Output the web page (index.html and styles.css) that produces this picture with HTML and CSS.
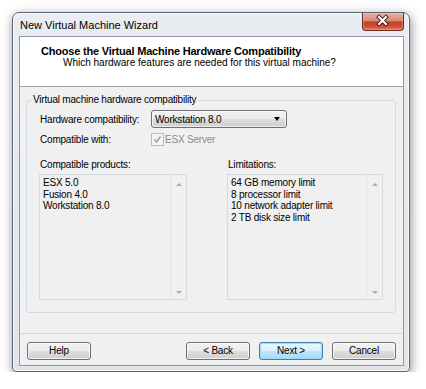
FILE: index.html
```html
<!DOCTYPE html>
<html>
<head>
<meta charset="utf-8">
<title>New Virtual Machine Wizard</title>
<link rel="stylesheet" href="styles.css">
</head>
<body>
<div class="window">
  <div class="titlebar">
    <span class="title">New Virtual Machine Wizard</span>
    <button class="close" aria-label="Close">
      <svg width="42" height="18" viewBox="0 0 42 18">
        <path d="M17.5 5 L24.5 12 M24.5 5 L17.5 12" stroke="#4a1d17" stroke-width="4.2" stroke-linecap="square" fill="none"/>
        <path d="M17.5 5 L24.5 12 M24.5 5 L17.5 12" stroke="#ffffff" stroke-width="2.2" stroke-linecap="square" fill="none"/>
      </svg>
    </button>
  </div>
  <div class="client">
    <div class="header">
      <div class="h-title">Choose the Virtual Machine Hardware Compatibility</div>
      <div class="h-sub">Which hardware features are needed for this virtual machine?</div>
    </div>
    <div class="body">
      <fieldset class="group">
        <legend>Virtual machine hardware compatibility</legend>
        <div class="gb">
          <div class="row">
            <span class="lbl">Hardware compatibility:</span>
            <div class="combo"><span>Workstation 8.0</span><span class="arrow"></span></div>
          </div>
          <div class="row row2">
            <span class="lbl">Compatible with:</span>
            <span class="check">
              <span class="box"><svg width="11" height="11" viewBox="0 0 11 11"><path d="M2.5 5.5 L4.5 8 L8.5 2.5" stroke="#a2a2a2" stroke-width="1.4" fill="none"/></svg></span>
              <span class="dis">ESX Server</span>
            </span>
          </div>
          <div class="lists">
            <div class="col">
              <div class="lbl">Compatible products:</div>
              <div class="list">
                <ul class="items">
                  <li>ESX 5.0</li>
                  <li>Fusion 4.0</li>
                  <li>Workstation 8.0</li>
                </ul>
                <div class="sb"><span class="up"></span><span class="down"></span></div>
              </div>
            </div>
            <div class="col">
              <div class="lbl">Limitations:</div>
              <div class="list">
                <ul class="items">
                  <li>64 GB memory limit</li>
                  <li>8 processor limit</li>
                  <li>10 network adapter limit</li>
                  <li>2 TB disk size limit</li>
                </ul>
                <div class="sb"><span class="up"></span><span class="down"></span></div>
              </div>
            </div>
          </div>
        </div>
      </fieldset>
    </div>
    <div class="footer">
      <button class="btn">Help</button>
      <button class="btn back">&lt; Back</button>
      <button class="btn default">Next &gt;</button>
      <button class="btn">Cancel</button>
    </div>
  </div>
</div>
</body>
</html>
```
FILE: styles.css
```css
html, body {
  margin: 0;
  background: #ffffff;
  font-family: "Liberation Sans", Arial, sans-serif;
}

.window {
  margin: 12px 0 0 12px;
  width: 398px;
  box-sizing: border-box;
  border: 1px solid #5b6673;
  border-radius: 7px 7px 4px 4px;
  background: linear-gradient(#e9edf1, #dfe5eb);
  padding: 0 5px 5px 6px;
  box-shadow: 1px 3px 11px rgba(0, 0, 0, 0.45), inset 0 0 0 1px rgba(255, 255, 255, 0.7);
}

.titlebar {
  display: flex;
  justify-content: space-between;
  align-items: flex-start;
  height: 23px;
}

.title {
  font-size: 11px;
  line-height: 13px;
  padding-top: 6px;
  margin-left: 1px;
  color: #000;
}

.close {
  width: 42px;
  height: 18px;
  padding: 0;
  margin: 0;
  box-sizing: border-box;
  border: 1px solid #6b2a20;
  border-top: none;
  border-radius: 0 0 4px 4px;
  background: linear-gradient(#eab0a2 0%, #d9897a 45%, #c5432d 52%, #c94a33 75%, #e07a5c 100%);
  box-shadow: inset 0 0 0 1px rgba(255, 200, 190, 0.35);
  display: flex;
  align-items: center;
  justify-content: center;
}
.close svg { display: block; margin: -1px 0 0 -1px; }

.client {
  height: 330px;
  box-sizing: border-box;
  border: 1px solid #8f9aa6;
  background: #f0f0f0;
  display: flex;
  flex-direction: column;
  font-size: 10px;
  letter-spacing: -0.2px;
  color: #000;
}

.header {
  height: 49px;
  background: #ffffff;
  border-bottom: 1px solid #a0a0a0;
  padding-top: 8px;
  box-sizing: border-box;
  height: 50px;
}
.h-title {
  font-size: 11px;
  font-weight: bold;
  line-height: 12px;
  padding-left: 21px;
}
.h-sub {
  font-size: 10px;
  letter-spacing: 0;
  line-height: 12px;
  padding-left: 43px;
}

.body {
  flex: 1;
}

.group {
  margin: 7px 7px 0 6px;
  padding: 0;
  border: 1px solid #d3dce3;
  border-radius: 3px;
  min-width: 0;
}
.group legend {
  margin-left: 4px;
  padding: 0 2px;
  font-size: 10px;
  line-height: 12px;
}

.gb {
  padding: 4px 12px 12px 12px;
}

.row {
  display: flex;
  align-items: center;
  height: 18px;
}
.row2 { margin-top: 2px; }
.row .lbl {
  width: 111px;
  padding-left: 1px;
}

.combo {
  width: 136px;
  height: 18px;
  box-sizing: border-box;
  border: 1px solid #707070;
  border-radius: 3px;
  background: linear-gradient(#f2f2f2 0%, #ebebeb 50%, #dddddd 51%, #cfcfcf 100%);
  box-shadow: inset 0 0 0 1px rgba(255, 255, 255, 0.6);
  display: flex;
  align-items: center;
  justify-content: space-between;
  padding: 0 6px 0 3px;
}
.arrow {
  width: 0;
  height: 0;
  border-left: 3.5px solid transparent;
  border-right: 3.5px solid transparent;
  border-top: 4px solid #000;
}

.check {
  display: flex;
  align-items: center;
}
.box {
  width: 13px;
  height: 13px;
  box-sizing: border-box;
  border: 1px solid #bcbcbc;
  background: #f4f4f4;
  margin-right: 1px;
  display: flex;
}
.box svg { display: block; }
.dis { color: #8d8d8d; }

.lists {
  display: grid;
  grid-template-columns: 148px 156px;
  column-gap: 40px;
  margin-top: 11px;
}
.col .lbl {
  line-height: 12px;
  margin-bottom: 3px;
  padding-left: 1px;
}

.list {
  height: 126px;
  box-sizing: border-box;
  border: 1px solid #d4dadf;
  display: flex;
}
.items {
  flex: 1;
  list-style: none;
  margin: 0;
  padding: 2px 3px;
  line-height: 11.5px;
}
.sb {
  width: 15px;
  border-left: 1px solid #e4e4e4;
  display: flex;
  flex-direction: column;
  justify-content: space-between;
  align-items: center;
  padding: 8px 0 5px;
}
.up {
  width: 0;
  height: 0;
  border-left: 3px solid transparent;
  border-right: 3px solid transparent;
  border-bottom: 3px solid #aeaeae;
}
.down {
  width: 0;
  height: 0;
  border-left: 3px solid transparent;
  border-right: 3px solid transparent;
  border-top: 3px solid #aeaeae;
}

.footer {
  height: 32px;
  box-sizing: border-box;
  border-top: 1px solid #d9d9d9;
  padding: 8px 7px 5px;
  display: flex;
  gap: 9px;
}

.btn {
  width: 64px;
  height: 18px;
  box-sizing: border-box;
  padding: 0;
  margin: 0;
  border: 1px solid #707070;
  border-radius: 3px;
  background: linear-gradient(#f2f2f2 0%, #ebebeb 50%, #dddddd 51%, #cfcfcf 100%);
  box-shadow: inset 0 0 0 1px rgba(255, 255, 255, 0.7);
  font-family: "Liberation Sans", Arial, sans-serif;
  font-size: 10px;
  letter-spacing: -0.2px;
  color: #000;
  line-height: 14px;
}
.back { margin-left: auto; }
.default {
  border-color: #3c7fb1;
  background: linear-gradient(#eaf6fd 0%, #d9f0fc 50%, #bee6fd 51%, #a7d9f5 100%);
  box-shadow: inset 0 0 0 1px #9fdcf7;
}
```
